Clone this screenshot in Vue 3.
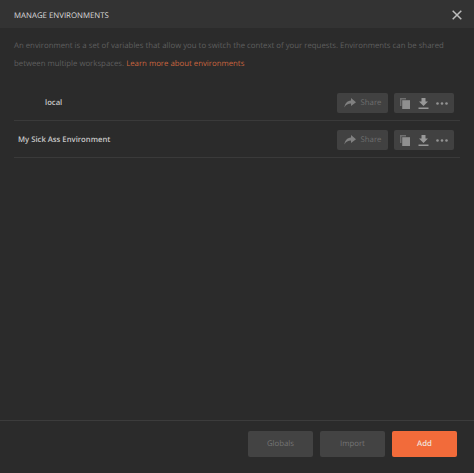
<template>
  <div class="modal">
    <header class="modal-header">
      <h1>MANAGE ENVIRONMENTS</h1>
      <button class="close" aria-label="Close">
        <svg width="10" height="10" viewBox="0 0 10 10"><path d="M.7 .7l8.600 8.600M9.300 .7L.7 9.300" stroke="#bdbdbd" stroke-width="1.500" fill="none" /></svg>
      </button>
    </header>

    <main class="modal-body">
      <p class="intro">
        An environment is a set of variables that allow you to switch the context of your requests. Environments can be shared between multiple workspaces.
        <a href="#">Learn more about environments</a>
      </p>

      <ul class="env-list">
        <li v-for="env in environments" :key="env.name" class="env-row">
          <span class="env-name" :class="{ indented: env.indented }">{{ env.name }}</span>
          <button class="share">
            <svg width="12" height="10" viewBox="0 0 12 10"><path d="M7 0l5 4.200L7 8V5.600C4 5.600 2 6.700 .4 9.500 .9 5.500 3 2.800 7 2.400z" fill="#808080" /></svg>
            Share
          </button>
          <div class="actions">
            <svg width="10" height="11" viewBox="0 0 10 11"><path d="M0 0h6v1.500H1.500V8H0z" fill="#6f6f6f" /><path d="M2.200 2.200H10V11H2.200z" fill="#8f8f8f" /></svg>
            <svg width="11" height="11" viewBox="0 0 11 11"><path d="M3.500 0h4v3.500H10L5.500 8 1 3.500h2.500zM.5 9.500h10V11H.5z" fill="#989898" /></svg>
            <svg width="12" height="3" viewBox="0 0 12 3"><circle cx="1.500" cy="1.500" r="1.300" fill="#939393" /><circle cx="6" cy="1.500" r="1.300" fill="#939393" /><circle cx="10.500" cy="1.500" r="1.300" fill="#939393" /></svg>
          </div>
        </li>
      </ul>
    </main>

    <footer class="modal-footer">
      <button class="btn">Globals</button>
      <button class="btn">Import</button>
      <button class="btn primary">Add</button>
    </footer>
  </div>
</template>

<script setup>
const environments = [
  { name: 'local', indented: true },
  { name: 'My Sick Ass Environment', indented: false },
]
</script>

<style>
html, body {
  margin: 0;
  background: #2b2b2b;
}
</style>

<style scoped>
.modal {
  width: 474px;
  height: 473px;
  display: flex;
  flex-direction: column;
  background: #2b2b2b;
  font-family: "Open Sans", sans-serif;
  text-rendering: geometricPrecision;
  box-sizing: border-box;
}
.modal-header {
  height: 28px;
  padding: 2px 12px 0 14px;
  flex: none;
  display: flex;
  align-items: center;
  justify-content: space-between;
  background: #333;
  box-sizing: border-box;
}
h1 {
  margin: 2px 0 0;
  font-size: 7.850px;
  font-weight: 400;
  color: #dcdcdc;
}
.close {
  border: 0;
  padding: 0;
  background: none;
  display: flex;
}
.modal-body {
  flex: 1;
  padding: 9px 14px 0;
}
.intro {
  margin: 0 0 11px;
  width: 446px;
  font-size: 7.800px;
  line-height: 18px;
  color: #5f5f5f;
}
.intro a {
  color: #c9653f;
  text-decoration: none;
}
.env-list {
  margin: 0;
  padding: 0;
  list-style: none;
}
.env-row {
  height: 37px;
  padding: 2px 6px 0 0;
  display: flex;
  align-items: center;
  gap: 6px;
  border-bottom: 1px solid #3a3a3a;
  box-sizing: border-box;
}
.env-name {
  margin-right: auto;
  padding-left: 4px;
  font-size: 7.700px;
  font-weight: 600;
  color: #c8c8c8;
}
.env-name.indented {
  padding-left: 31px;
}
.share {
  width: 51px;
  height: 20px;
  padding: 0;
  border: 0;
  border-radius: 2px;
  display: flex;
  align-items: center;
  justify-content: center;
  gap: 5px;
  background: #414141;
  color: #6e6e6e;
  font: 7.800px "Open Sans", sans-serif;
  text-rendering: geometricPrecision;
}
.actions {
  width: 60px;
  height: 20px;
  padding: 0 6px;
  border-radius: 2px;
  display: flex;
  align-items: center;
  justify-content: space-between;
  box-sizing: border-box;
  background: #414141;
}
.modal-footer {
  height: 53px;
  padding: 10px 17px 0 0;
  flex: none;
  display: flex;
  justify-content: flex-end;
  gap: 7px;
  border-top: 1px solid #3c3c3c;
  box-sizing: border-box;
}
.btn {
  width: 65px;
  height: 26px;
  padding: 0;
  border: 0;
  border-radius: 2px;
  background: #434343;
  color: #757575;
  font: 7.800px "Open Sans", sans-serif;
  text-rendering: geometricPrecision;
}
.btn.primary {
  background: #f26b3a;
  color: #f1e0d8;
  font-weight: 600;
}
</style>
